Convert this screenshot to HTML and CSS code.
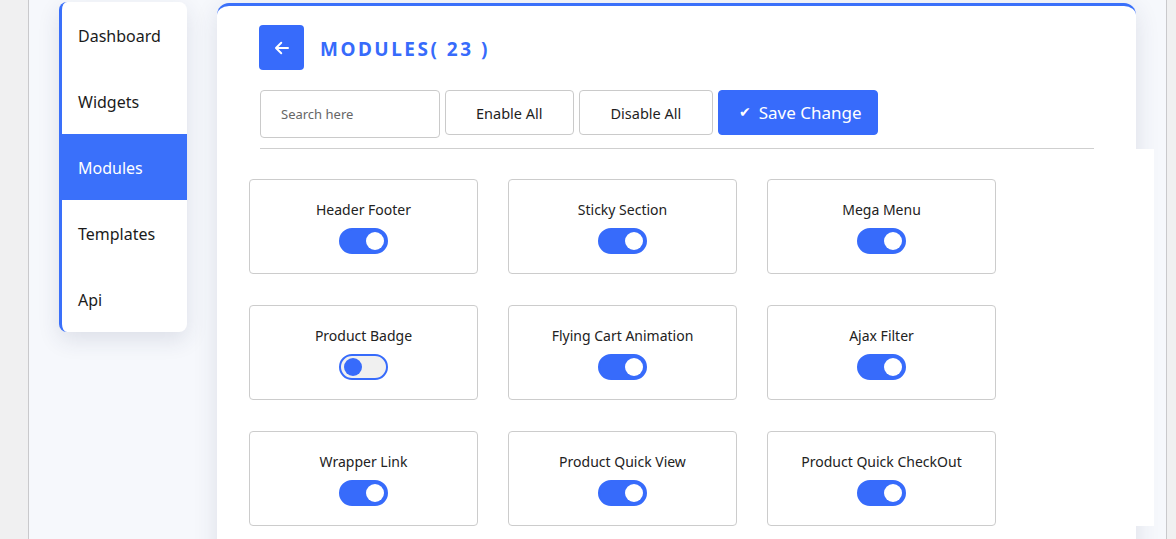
FILE: index.html
```html
<!DOCTYPE html>
<html lang="en">
<head>
    <meta charset="UTF-8">
    <meta name="viewport" content="width=device-width, initial-scale=1.0">
    <title>Modules</title>
    <link rel="stylesheet" href="styles.css">
</head>
<body>
    <div class="admin-strip"></div>

    <div class="page">
        <!-- Side navigation -->
        <nav class="side-nav">
            <a class="nav-item" href="#">Dashboard</a>
            <a class="nav-item" href="#">Widgets</a>
            <a class="nav-item active" href="#">Modules</a>
            <a class="nav-item" href="#">Templates</a>
            <a class="nav-item" href="#">Api</a>
        </nav>

        <main class="panel">
            <div class="panel-head">
                <div class="title-row">
                    <button class="back-btn" type="button">
                        <svg width="18" height="18" viewBox="0 0 24 24" fill="none" stroke="#fff" stroke-width="2.6" stroke-linecap="round" stroke-linejoin="round">
                            <line x1="20" y1="12" x2="5" y2="12"></line>
                            <polyline points="11 5 4 12 11 19"></polyline>
                        </svg>
                    </button>
                    <h2 class="title">MODULES( 23 )</h2>
                </div>

                <div class="toolbar">
                    <input class="search" type="text" placeholder="Search here">
                    <button class="btn" type="button">Enable All</button>
                    <button class="btn" type="button">Disable All</button>
                    <button class="btn btn-primary" type="button"><span class="check">&#10004;</span> Save Change</button>
                </div>
            </div>

            <section class="modules">
                <div class="module">
                    <span class="module-name">Header Footer</span>
                    <label class="switch"><input type="checkbox" checked><span class="slider"></span></label>
                </div>
                <div class="module">
                    <span class="module-name">Sticky Section</span>
                    <label class="switch"><input type="checkbox" checked><span class="slider"></span></label>
                </div>
                <div class="module">
                    <span class="module-name">Mega Menu</span>
                    <label class="switch"><input type="checkbox" checked><span class="slider"></span></label>
                </div>
                <div class="module">
                    <span class="module-name">Product Badge</span>
                    <label class="switch"><input type="checkbox"><span class="slider"></span></label>
                </div>
                <div class="module">
                    <span class="module-name">Flying Cart Animation</span>
                    <label class="switch"><input type="checkbox" checked><span class="slider"></span></label>
                </div>
                <div class="module">
                    <span class="module-name">Ajax Filter</span>
                    <label class="switch"><input type="checkbox" checked><span class="slider"></span></label>
                </div>
                <div class="module">
                    <span class="module-name">Wrapper Link</span>
                    <label class="switch"><input type="checkbox" checked><span class="slider"></span></label>
                </div>
                <div class="module">
                    <span class="module-name">Product Quick View</span>
                    <label class="switch"><input type="checkbox" checked><span class="slider"></span></label>
                </div>
                <div class="module">
                    <span class="module-name">Product Quick CheckOut</span>
                    <label class="switch"><input type="checkbox" checked><span class="slider"></span></label>
                </div>
            </section>
        </main>
    </div>
</body>
</html>
```

FILE: styles.css
```css
* {
    box-sizing: border-box;
}

body {
    margin: 0;
    height: 539px;
    overflow: hidden;
    display: flex;
    background-color: #f0f0f1;
    font-family: 'Segoe UI', 'Noto Sans', sans-serif;
    color: #1e1e1e;
}

.admin-strip {
    width: 29px;
    flex-shrink: 0;
    border-right: 1px solid #c9c9cc;
}

.page {
    width: 1138px;
    display: flex;
    align-items: flex-start;
    gap: 30px;
    padding: 2px 0 0 30px;
    background-color: #f6f8fc;
    border-right: 1px solid #c9c9cc;
}

/* Side navigation */
.side-nav {
    width: 128px;
    flex-shrink: 0;
    display: flex;
    flex-direction: column;
    background-color: #fff;
    border-left: 3px solid #3a70fa;
    border-radius: 8px;
    overflow: hidden;
    box-shadow: 0 8px 22px rgba(40, 50, 90, 0.12);
}

.nav-item {
    height: 66px;
    display: flex;
    align-items: center;
    padding: 2px 0 0 16px;
    font-size: 16px;
    color: #1b1b1b;
    text-decoration: none;
}

.nav-item.active {
    background-color: #3a70fa;
    color: #fff;
}

/* Main panel */
.panel {
    width: 919px;
    margin-top: 1px;
    min-height: 600px;
    background-color: #fff;
    border-top: 3px solid #3a70fa;
    border-radius: 12px 12px 0 0;
    box-shadow: 0 6px 24px rgba(40, 50, 90, 0.12);
}

.panel-head {
    padding: 19px 42px 0 42px;
}

.title-row {
    display: flex;
    align-items: center;
    gap: 16px;
}

.back-btn {
    width: 45px;
    height: 45px;
    border: none;
    border-radius: 4px;
    background-color: #376bfb;
    display: flex;
    align-items: center;
    justify-content: center;
    padding: 0;
}

.title {
    margin: 2px 0 0;
    font-size: 19px;
    font-weight: 700;
    letter-spacing: 2.5px;
    color: #376bfb;
}

.toolbar {
    display: flex;
    align-items: flex-start;
    gap: 5px;
    margin-top: 20px;
    margin-left: 1px;
    padding-bottom: 10px;
    border-bottom: 1px solid #cfcfcf;
}

.search {
    width: 180px;
    height: 48px;
    border: 1px solid #cacaca;
    border-radius: 4px;
    padding: 0 20px;
    font-family: inherit;
    font-size: 13px;
    color: #333;
    outline: none;
}

.search::placeholder {
    color: #666;
}

.btn {
    height: 45px;
    padding: 0 30px;
    border: 1px solid #cacaca;
    border-radius: 4px;
    background-color: #fff;
    font-family: inherit;
    font-size: 14.5px;
    color: #1e1e1e;
}

.btn:nth-child(3) {
    padding: 0 31px;
}

.btn-primary {
    border-color: #376bfb;
    background-color: #376bfb;
    color: #fff;
    font-size: 17px;
    padding: 0 15px 0 20px;
}

.check {
    font-size: 14px;
    margin-right: 3px;
    position: relative;
    top: -2px;
}

/* Module grid */
.modules {
    width: 937px;
    margin-right: -18px;
    background-color: #fff;
    display: grid;
    grid-template-columns: repeat(3, 229px);
    column-gap: 30px;
    row-gap: 31px;
    padding: 30px 0 0 32px;
}

.module {
    height: 95px;
    border: 1px solid #cccccc;
    border-radius: 4px;
    display: flex;
    flex-direction: column;
    align-items: center;
    padding-top: 20px;
    gap: 9px;
}

.module-name {
    font-size: 14px;
    color: #222;
}

.switch {
    position: relative;
    width: 49px;
    height: 26px;
    display: inline-block;
}

.switch input {
    display: none;
}

.slider {
    position: absolute;
    inset: 0;
    border-radius: 13px;
    background-color: #f0f0f0;
    border: 2px solid #376bfb;
}

.slider::before {
    content: "";
    position: absolute;
    top: 2px;
    left: 3px;
    width: 18px;
    height: 18px;
    border-radius: 50%;
    background-color: #376bfb;
}

.switch input:checked + .slider {
    background-color: #376bfb;
}

.switch input:checked + .slider::before {
    left: 25px;
    background-color: #fff;
}
```
